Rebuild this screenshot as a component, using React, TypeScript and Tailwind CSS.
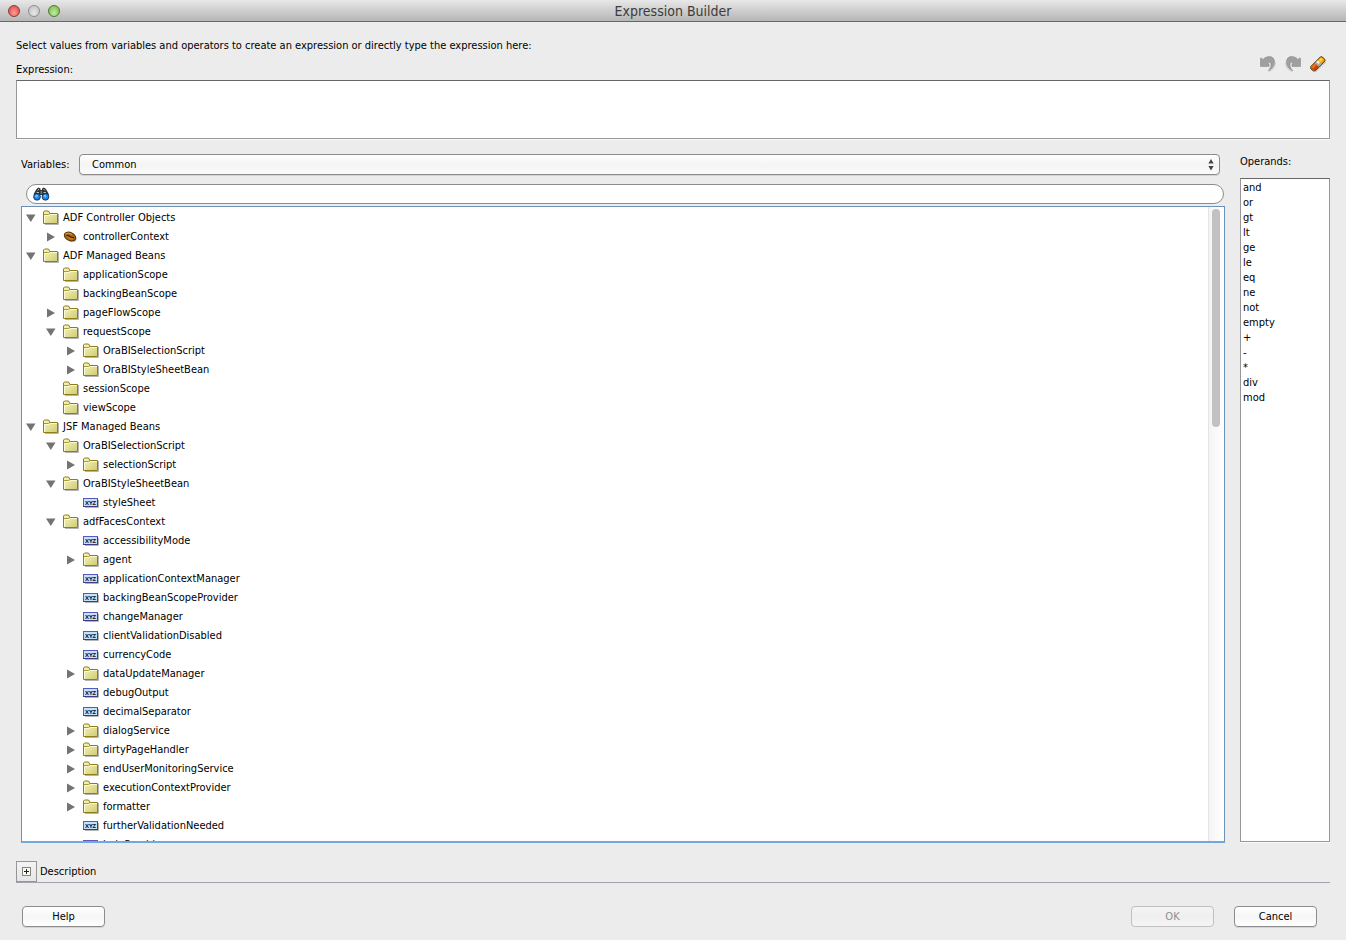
import { useState } from 'react';

type NodeKind = 'folder' | 'bean' | 'value';

interface TreeNode {
  label: string;
  kind?: NodeKind;
  expandable?: boolean;
  open?: boolean;
  children?: TreeNode[];
}

const operands = [
  'and', 'or', 'gt', 'lt', 'ge', 'le', 'eq', 'ne', 'not', 'empty', '+', '-', '*', 'div', 'mod',
];

const variables: TreeNode[] = [
  {
    label: 'ADF Controller Objects',
    open: true,
    children: [{ label: 'controllerContext', kind: 'bean', expandable: true }],
  },
  {
    label: 'ADF Managed Beans',
    open: true,
    children: [
      { label: 'applicationScope' },
      { label: 'backingBeanScope' },
      { label: 'pageFlowScope', expandable: true },
      {
        label: 'requestScope',
        open: true,
        children: [
          { label: 'OraBISelectionScript', expandable: true },
          { label: 'OraBIStyleSheetBean', expandable: true },
        ],
      },
      { label: 'sessionScope' },
      { label: 'viewScope' },
    ],
  },
  {
    label: 'JSF Managed Beans',
    open: true,
    children: [
      {
        label: 'OraBISelectionScript',
        open: true,
        children: [{ label: 'selectionScript', expandable: true }],
      },
      {
        label: 'OraBIStyleSheetBean',
        open: true,
        children: [{ label: 'styleSheet', kind: 'value' }],
      },
      {
        label: 'adfFacesContext',
        open: true,
        children: [
          { label: 'accessibilityMode', kind: 'value' },
          { label: 'agent', expandable: true },
          { label: 'applicationContextManager', kind: 'value' },
          { label: 'backingBeanScopeProvider', kind: 'value' },
          { label: 'changeManager', kind: 'value' },
          { label: 'clientValidationDisabled', kind: 'value' },
          { label: 'currencyCode', kind: 'value' },
          { label: 'dataUpdateManager', expandable: true },
          { label: 'debugOutput', kind: 'value' },
          { label: 'decimalSeparator', kind: 'value' },
          { label: 'dialogService', expandable: true },
          { label: 'dirtyPageHandler', expandable: true },
          { label: 'endUserMonitoringService', expandable: true },
          { label: 'executionContextProvider', expandable: true },
          { label: 'formatter', expandable: true },
          { label: 'furtherValidationNeeded', kind: 'value' },
          { label: 'helpProvider', kind: 'value' },
        ],
      },
    ],
  },
];

function FolderIcon() {
  return (
    <svg width="16" height="15" viewBox="0 0 16 15" className="shrink-0">
      <path d="M2 14.5H15.5V4" fill="none" stroke="#b4b4b4" />
      <path d="M0.5 13.5V2L1.5 1H5.5L7 3.5H14.5V13.5Z" fill="url(#folderFill)" stroke="#8f7d1c" />
      <path d="M1.5 13V5.5H6L7.5 4.5H14" fill="none" stroke="#fbfad2" />
      <path d="M1 4.5H5.5L7 3.5" fill="none" stroke="#a89a35" />
    </svg>
  );
}

function BeanIcon() {
  return (
    <svg width="16" height="15" viewBox="0 0 16 15" className="shrink-0">
      <ellipse cx="8" cy="8.6" rx="6" ry="4" transform="rotate(25 8 8.6)" fill="#bbb" />
      <ellipse cx="7" cy="7.5" rx="6" ry="4" transform="rotate(25 7 7.5)" fill="#ab6a12" stroke="#5c3203" />
      <path d="M2.5 5C5 3.5 7 4.5 9 5.5" fill="none" stroke="#e0a044" />
      <path d="M3.5 6.5C6 5.5 7 9 11 8.5" fill="none" stroke="#422200" strokeWidth="1.2" />
      <path d="M4.5 8.2C6 8.5 7 10.2 10 10.2" fill="none" stroke="#d08a24" />
    </svg>
  );
}

function ValueIcon() {
  return (
    <svg width="16" height="10" viewBox="0 0 16 10" className="shrink-0">
      <path d="M2 9.5H15.5V2" fill="none" stroke="#b4b4b4" />
      <rect x="0.5" y="0.5" width="14" height="8" fill="#c6e2f8" stroke="#5858c0" />
      <path d="M0 8.5H14.5V1" fill="none" stroke="#3d3d86" />
      <text x="7.5" y="7" textAnchor="middle" fontSize="6" fontWeight="700" fill="#10102c" className="font-['Open_Sans']">
        XYZ
      </text>
    </svg>
  );
}

function BinocularsIcon() {
  return (
    <svg width="17" height="14" viewBox="0 0 17 14">
      <path d="M3.5 2L5.5 0.5L7.5 1.5V3H9V1.5L11 0.5L13 2L15.8 7L15 11H9.5V8H7V11H1.5L0.7 7Z" fill="#2f3336" />
      <path d="M4.5 3.5L6 2M10.5 2L12 3.5M3.5 5.5H6M10.5 5.5H13" stroke="#b9c0c4" />
      <path d="M8.2 4V7" stroke="#8c9296" />
      <circle cx="4" cy="9.8" r="3.4" fill="#1c82e6" stroke="#10253e" strokeWidth="0.8" />
      <circle cx="12.5" cy="9.8" r="3.4" fill="#1c82e6" stroke="#10253e" strokeWidth="0.8" />
      <circle cx="3.5" cy="9.2" r="1.4" fill="#69bcff" />
      <circle cx="12" cy="9.2" r="1.4" fill="#69bcff" />
    </svg>
  );
}

function UndoIcon() {
  return (
    <svg width="16" height="16" viewBox="0 0 16 16">
      <path d="M9 15.5C13.5 13.5 15.5 10.5 15.3 6.5" fill="none" stroke="#c8c8c8" />
      <path
        d="M0.4 2.2H1.6L3.2 3.4C4.8 1.4 7 0.6 9.6 0.6C12.8 0.6 14.6 3 14.5 6.2C14.4 10 12 13.2 8.2 14.8C10.2 12.6 11.2 10.4 11 8.2C10.8 6.4 9.4 5.6 7.8 6.8L9 8.2V10.4H0.4Z"
        fill="#9f9f9f"
        stroke="#8b8b8b"
        strokeWidth="0.6"
      />
    </svg>
  );
}

function EraserIcon() {
  return (
    <svg width="16" height="16" viewBox="0 0 16 16">
      <path d="M5 15.5L15.5 5.5" stroke="#c4c4c4" strokeWidth="2" />
      <path d="M0.8 10.5L10.5 0.8H12L15 3.5V4.8L5.5 14.6L3.5 15L0.8 12.8Z" fill="#f9a800" stroke="#3b2410" strokeWidth="0.9" />
      <path d="M1.3 11L5 7.2L9 10.8L5.2 14.3L3.5 14.5L1.3 12.6Z" fill="#c84208" />
      <path d="M1.8 11.2L5 7.7L6.3 8.9L3 12.4Z" fill="#f37a20" />
      <path d="M5 7.2L7.8 4.2L11.8 7.8L9 10.8Z" fill="#a5aab0" />
      <path d="M6.3 6L7.8 4.4L10 6.4L8.5 8Z" fill="#eef1f4" />
      <path d="M8.8 4.3L11 1.8L12.6 3.2L10.4 5.7Z" fill="#ffd84a" />
    </svg>
  );
}

function NodeIcon({ kind }: { kind: NodeKind }) {
  if (kind === 'bean') return <BeanIcon />;
  if (kind === 'value') return <ValueIcon />;
  return <FolderIcon />;
}

function TreeItem({ node }: { node: TreeNode }) {
  const [open, setOpen] = useState(!!node.open);
  const expandable = node.expandable || !!node.children;

  return (
    <li>
      <div className="flex h-[19px] items-center">
        {expandable ? (
          <button
            type="button"
            aria-label={`Toggle ${node.label}`}
            aria-expanded={open}
            onClick={() => setOpen(!open)}
            className="w-[17px] shrink-0"
          >
            <svg width="10" height="10" viewBox="0 0 10 10" fill="#737373">
              {open ? <path d="M0 1.5H9.5L4.8 9Z" /> : <path d="M1 0.5V9.5L9 5Z" />}
            </svg>
          </button>
        ) : (
          <span className="w-[17px] shrink-0" />
        )}
        <NodeIcon kind={node.kind ?? 'folder'} />
        <span className="pl-1 whitespace-nowrap">{node.label}</span>
      </div>
      {open && node.children && (
        <ul className="pl-5">
          {node.children.map((child) => (
            <TreeItem key={child.label} node={child} />
          ))}
        </ul>
      )}
    </li>
  );
}

export default function App() {
  const [expression, setExpression] = useState('');
  const [filter, setFilter] = useState('');
  const [showDescription, setShowDescription] = useState(false);

  const buttonClass =
    'h-[21px] w-[83px] rounded-[4px] border border-[#8c8c8c] bg-linear-to-b from-white via-[#f6f6f6] to-white shadow-[0_1px_0_#d4d4d4] disabled:border-[#c0c0c0] disabled:from-[#f4f4f4] disabled:via-[#efefef] disabled:to-[#f4f4f4] disabled:text-[#8e8e8e] disabled:shadow-none';

  return (
    <div className="flex h-screen flex-col bg-[#ececec] font-['DejaVu_Sans_Condensed','DejaVu_Sans',sans-serif] text-[11px] leading-4 text-black">
      <svg width="0" height="0" className="absolute">
        <defs>
          <linearGradient id="folderFill" x1="0" y1="0" x2="1" y2="1">
            <stop offset="0" stopColor="#f8f6c0" />
            <stop offset="1" stopColor="#cfcb72" />
          </linearGradient>
        </defs>
      </svg>

      {/* Title bar */}
      <header className="grid h-[22px] shrink-0 grid-cols-[1fr_auto_1fr] items-center border-b border-[#686868] bg-linear-to-b from-[#e8e8e8] to-[#b6b6b6] px-2">
        <div className="flex gap-2">
          <button type="button" aria-label="Close" className="size-3 rounded-full border border-[#8d3a38] bg-radial-[at_50%_70%] from-[#ff9c96] to-[#d8413e]" />
          <button type="button" aria-label="Minimize" className="size-3 rounded-full border border-[#8e8e8e] bg-radial-[at_50%_70%] from-[#e6e6e6] to-[#bdbdbd]" />
          <button type="button" aria-label="Zoom" className="size-3 rounded-full border border-[#4c7a33] bg-radial-[at_50%_70%] from-[#c4eb9e] to-[#6fb545]" />
        </div>
        <h1 className="text-[14px] text-[#3c3c3c]">Expression Builder</h1>
      </header>

      <main className="flex min-h-0 flex-1 flex-col px-4 pt-4">
        <div className="flex items-end justify-between">
          <div>
            <p>Select values from variables and operators to create an expression or directly type the expression here:</p>
            <label htmlFor="expression" className="mt-2 block">Expression:</label>
          </div>
          <div className="flex gap-[9px] pr-1 pb-[6px]">
            <button type="button" aria-label="Undo"><UndoIcon /></button>
            <button type="button" aria-label="Redo" className="-scale-x-100"><UndoIcon /></button>
            <button type="button" aria-label="Clear"><EraserIcon /></button>
          </div>
        </div>
        <textarea
          id="expression"
          value={expression}
          onChange={(e) => setExpression(e.target.value)}
          className="mt-[2px] block h-[59px] w-full shrink-0 resize-none border border-[#979797] border-t-[#666] bg-white px-1 shadow-[0_1px_0_#fafafa] outline-none"
        />

        <div className="flex min-h-0 flex-1 gap-[15px] pt-[15px]">
          {/* Variables */}
          <section className="flex min-w-0 flex-1 flex-col pl-[5px]">
            <div className="flex shrink-0 items-center pr-[5px]">
              <label htmlFor="variables" className="w-[58px] shrink-0">Variables:</label>
              <div className="relative flex-1">
                <select
                  id="variables"
                  className="block h-[21px] w-full appearance-none rounded-[4px] border border-[#8c8c8c] bg-linear-to-b from-white via-[#f4f4f4] to-[#fbfbfb] pl-3 shadow-[0_1px_0_#d4d4d4] outline-none"
                >
                  <option>Common</option>
                </select>
                <svg width="6" height="12" viewBox="0 0 6 12" fill="#444" className="pointer-events-none absolute top-[5px] right-[6px]">
                  <path d="M3 0L5.6 4.5H0.4ZM3 11.5L5.6 7H0.4Z" />
                </svg>
              </div>
            </div>
            <div className="mt-[9px] mr-px ml-[5px] flex h-5 shrink-0 items-center rounded-full border border-[#8c8c8c] bg-white pl-[6px]">
              <BinocularsIcon />
              <input
                type="text"
                aria-label="Search variables"
                value={filter}
                onChange={(e) => setFilter(e.target.value)}
                className="min-w-0 flex-1 px-2 outline-none"
              />
            </div>
            <div className="mt-[2px] flex min-h-0 flex-1 border border-b-2 border-[#6c92b8] border-b-[#74a8dc] bg-white">
              <ul className="min-w-0 flex-1 overflow-y-auto pt-px pl-1 [scrollbar-width:none]">
                {variables.map((node) => (
                  <TreeItem key={node.label} node={node} />
                ))}
              </ul>
              <div className="w-4 border-l border-[#e4e4e4] bg-linear-to-r from-[#f4f4f4] to-white px-[3px] pt-[2px]">
                <div className="h-[218px] w-2 rounded-full bg-[#c1c1c1]" />
              </div>
            </div>
          </section>

          {/* Operands */}
          <section className="flex w-[90px] shrink-0 flex-col pb-px">
            <h2 id="operands">Operands:</h2>
            <ul
              aria-labelledby="operands"
              className="mt-2 flex-1 border border-[#979797] border-t-[#666] bg-white pt-px pl-[2px] shadow-[0_1px_0_#fafafa]"
            >
              {operands.map((op) => (
                <li key={op} className="leading-[15px]">{op}</li>
              ))}
            </ul>
          </section>
        </div>

        {/* Description */}
        <div className="mt-[18px] flex shrink-0 items-center border-b border-[#a0a5ab]">
          <button
            type="button"
            aria-label="Show description"
            aria-expanded={showDescription}
            onClick={() => setShowDescription(!showDescription)}
            className="flex size-[21px] items-center justify-center border border-[#979797] bg-linear-to-b from-[#f4f4f4] to-[#e6e6e6]"
          >
            <svg width="9" height="9" viewBox="0 0 9 9" fill="none">
              <rect x="0.5" y="0.5" width="8" height="8" fill="#f8f8f4" stroke="#85857c" />
              <path d={showDescription ? 'M2 4.5H7' : 'M2 4.5H7M4.5 2V7'} stroke="#222" />
            </svg>
          </button>
          <span className="pl-[3px]">Description</span>
        </div>
      </main>

      <footer className="flex shrink-0 px-[22px] pt-[23px] pb-[13px]">
        <button type="button" className={buttonClass}>Help</button>
        <div className="ml-auto flex gap-5 pr-[7px]">
          <button type="button" disabled className={buttonClass}>OK</button>
          <button type="button" className={buttonClass}>Cancel</button>
        </div>
      </footer>
    </div>
  );
}
